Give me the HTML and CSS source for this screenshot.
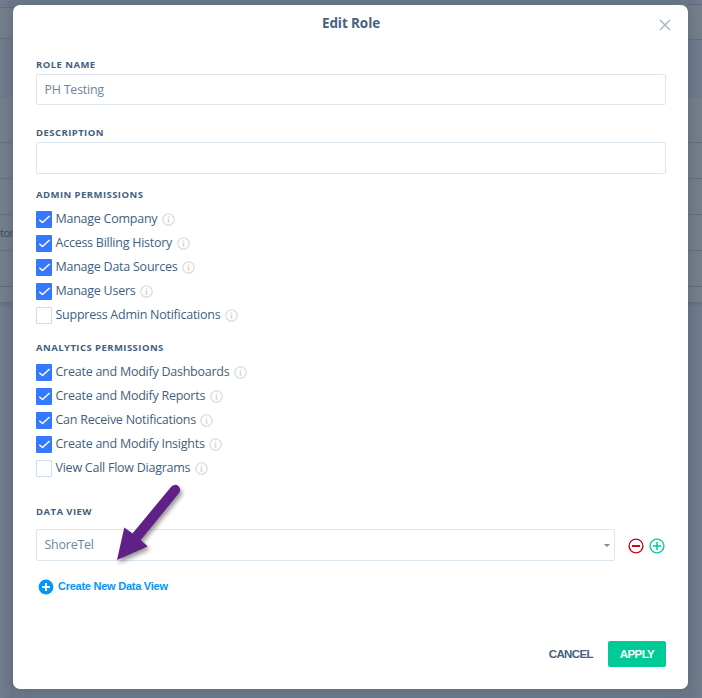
FILE: index.html
```html
<!DOCTYPE html>
<html lang="en">
<head>
<meta charset="utf-8">
<title>Edit Role</title>
<link rel="stylesheet" href="styles.css">
</head>
<body>
<svg class="defs" aria-hidden="true">
  <symbol id="info" viewBox="0 0 13 13"><circle cx="6.5" cy="6.5" r="5.7" fill="none" stroke="#dcdcdc" stroke-width="1.3"/><path d="M6.5 5.5v4M6.5 3.2v1.4" fill="none" stroke="#d6d6d6" stroke-width="1.5"/><path d="M5.2 5.8h1M5.2 9.3h2.7" stroke="#dedede" stroke-width=".7"/></symbol>
  <symbol id="check" viewBox="0 0 16 17"><path d="M3.3 8.8l3.2 2.8L13.6 5" fill="none" stroke="#fff" stroke-width="1.5"/></symbol>
</svg>
<div class="page">
  <div class="strip left">
    <div class="r top"></div><div class="r nav"></div><div class="r gap"></div><div class="r head"></div>
    <div class="r"></div><div class="r"></div><div class="r"><span class="cell">tor</span></div><div class="r"></div><div class="r last"></div>
  </div>
  <div class="strip right">
    <div class="r top"></div><div class="r nav"></div><div class="r gap"></div><div class="r head"></div>
    <div class="r"></div><div class="r"></div><div class="r"></div><div class="r"></div><div class="r last"></div>
  </div>
</div>
<main class="modal">
  <header class="title">Edit Role
    <svg class="close" width="12" height="12" viewBox="0 0 12 12"><path d="M1 1l10 10M11 1L1 11" stroke="#a3bccb" stroke-width="1.5"/></svg>
  </header>
  <div class="label">Role Name</div>
  <div class="input name">PH Testing</div>
  <div class="label desc">Description</div>
  <div class="input"></div>
  <div class="label admin">Admin Permissions</div>
  <ul class="perms">
    <li><span class="box on"><svg><use href="#check"/></svg></span><span>Manage Company</span><svg class="info"><use href="#info"/></svg></li>
    <li><span class="box on"><svg><use href="#check"/></svg></span><span>Access Billing History</span><svg class="info"><use href="#info"/></svg></li>
    <li><span class="box on"><svg><use href="#check"/></svg></span><span>Manage Data Sources</span><svg class="info"><use href="#info"/></svg></li>
    <li><span class="box on"><svg><use href="#check"/></svg></span><span>Manage Users</span><svg class="info"><use href="#info"/></svg></li>
    <li><span class="box"></span><span>Suppress Admin Notifications</span><svg class="info"><use href="#info"/></svg></li>
  </ul>
  <div class="label analytics">Analytics Permissions</div>
  <ul class="perms">
    <li><span class="box on"><svg><use href="#check"/></svg></span><span>Create and Modify Dashboards</span><svg class="info"><use href="#info"/></svg></li>
    <li><span class="box on"><svg><use href="#check"/></svg></span><span>Create and Modify Reports</span><svg class="info"><use href="#info"/></svg></li>
    <li><span class="box on"><svg><use href="#check"/></svg></span><span>Can Receive Notifications</span><svg class="info"><use href="#info"/></svg></li>
    <li><span class="box on"><svg><use href="#check"/></svg></span><span>Create and Modify Insights</span><svg class="info"><use href="#info"/></svg></li>
    <li><span class="box"></span><span>View Call Flow Diagrams</span><svg class="info"><use href="#info"/></svg></li>
  </ul>
  <div class="label view">Data View</div>
  <div class="viewrow">
    <div class="input select"><span>ShoreTel</span><svg width="6" height="3" viewBox="0 0 6 3"><path d="M0 0h6L3 3z" fill="#888"/></svg></div>
    <svg class="minus" width="16" height="16" viewBox="0 0 16 16"><circle cx="8" cy="8" r="6.9" fill="none" stroke="#d0021b" stroke-width="1.4"/><path d="M4 8h8" stroke="#d0021b" stroke-width="2"/></svg>
    <svg class="plus" width="16" height="16" viewBox="0 0 16 16"><circle cx="8" cy="8" r="6.9" fill="none" stroke="#00ca95" stroke-width="1.4"/><path d="M4 8h8M8 4v8" stroke="#00ca95" stroke-width="1.5"/></svg>
  </div>
  <div class="create">
    <svg width="16" height="16" viewBox="0 0 16 16"><circle cx="8" cy="8" r="7.4" fill="#0096ff"/><path d="M4 8h8M8 4v8" stroke="#fff" stroke-width="2"/></svg>
    <span>Create New Data View</span>
  </div>
  <footer class="actions"><span class="cancel">CANCEL</span><span class="apply">APPLY</span></footer>
  <svg class="arrow" width="80" height="90" viewBox="0 0 80 90"><path d="M7 80L14.3 47.5L22.5 53.5L61.2 6.7A5 5 0 0 1 69 13.1L30.8 60L37.7 66.4Z" fill="#5f2187"/></svg>
</main>
</body>
</html>
```

FILE: styles.css
```css
* { box-sizing: border-box; }
body { margin: 0; height: 698px; overflow: hidden; font-family: "Open Sans", sans-serif; color: #3f5f80; }
.defs { display: none; }
.page { display: flex; justify-content: space-between; height: 698px; background: #6b788a; }
.strip { width: 13px; background: linear-gradient(to right, #727e90, #6a7685); }
.strip.right { width: 14px; background: linear-gradient(to left, #727e90, #6a7685); }
.r { height: 36px; border-bottom: 1px solid #606e80; background: rgba(126, 132, 138, .35); font-size: 11px; line-height: 35px; color: #39495f; }
.cell { display: block; width: 20px; letter-spacing: -.5px; }
.left .top { height: 8px; background: none; }
.left .nav { height: 31px; }
.left .gap { height: 59px; }
.right .top { height: 5px; background: none; }
.right .nav { height: 35px; }
.right .gap { height: 58px; }
.strip .gap { background: none; border-bottom-color: #6d7989; }
.r.head { height: 45px; }
.r.last { height: 15px; border: 0; box-shadow: 0 2px 4px rgba(60, 72, 88, .35); }

.modal { position: absolute; left: 13px; top: 5px; width: 675px; height: 684px; padding: 0 22px 0 23px; background: #fff; border-radius: 7px; box-shadow: 0 2px 16px rgba(70, 82, 98, .3); }
.title { position: relative; height: 53px; padding-top: 7px; line-height: 22px; font-size: 13.5px; font-weight: 700; letter-spacing: -.1px; text-align: center; color: #45627f; }
.close { position: absolute; right: -5px; top: 14px; width: 12px; height: 12px; }
.label { height: 16px; font-size: 9.5px; line-height: 13px; font-weight: 700; letter-spacing: .45px; text-transform: uppercase; color: #45607d; }
.input { height: 32px; border: 1px solid #dce6f1; border-radius: 2px; padding: 0 7px 0 7.5px; font-size: 12.5px; letter-spacing: -.25px; line-height: 30px; color: #71859d; }
.input.name { height: 31px; }
.desc { margin-top: 21px; }
.admin { margin-top: 14px; height: 19px; }
.perms { list-style: none; margin: 0; padding: 0; }
.perms li { display: flex; height: 24px; align-items: center; font-size: 12.5px; letter-spacing: -.25px; line-height: 24px; }
.box { width: 16px; height: 17px; margin: 0 3.5px 0 0; border: 1px solid #cfdbe8; border-radius: 1px; flex: none; }
.box.on { background: #3478ff; border: 0; }
.box svg { display: block; width: 16px; height: 17px; }
.info { width: 13px; height: 13px; margin: 1px 0 0 4.5px; flex: none; }
.analytics { margin-top: 14px; height: 19px; }
.view { margin-top: 25px; height: 24px; }
.viewrow { display: flex; height: 32px; align-items: center; }
.select { width: 579px; display: flex; align-items: center; justify-content: space-between; padding-right: 4px; }
.minus { margin: 2px 5px 0 13px; }
.plus { margin-top: 2px; }
.create { display: flex; align-items: center; gap: 4px; height: 16px; margin: 18px 0 0 2px; font: 700 11px/16px "Liberation Sans", sans-serif; letter-spacing: -.25px; color: #0096ff; }
.create span { margin-top: -2px; }
.actions { display: flex; justify-content: flex-end; align-items: center; height: 26px; margin-top: 46px; font: 700 11.5px/26px "Liberation Sans", sans-serif; letter-spacing: -.6px; }
.cancel { margin-right: 15px; color: #48607a; }
.apply { width: 58px; height: 26px; border-radius: 2px; background: #00ca95; color: #fff; text-align: center; }
.arrow { position: absolute; left: 97px; top: 475px; filter: drop-shadow(2px 3px 2px rgba(0, 0, 0, .4)); }
```
